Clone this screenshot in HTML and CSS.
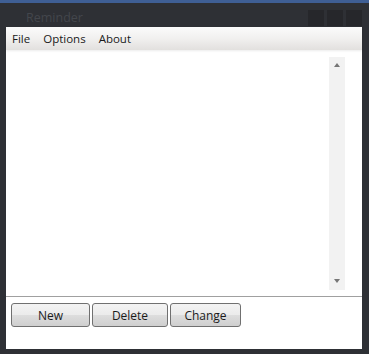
FILE: index.html
```html
<!DOCTYPE html>
<html lang="en">

<head>
  <meta charset="UTF-8" />
  <title>Reminder</title>
  <link rel="stylesheet" href="styles.css">
</head>

<body>
  <div class="window">
    <!-- Title bar -->
    <div class="titlebar">
      <span class="title">Reminder</span>
      <div class="caption-buttons">
        <span class="cap-btn"></span>
        <span class="cap-btn"></span>
        <span class="cap-btn"></span>
      </div>
    </div>

    <div class="client">
      <div class="menubar">
        <span class="menu-item">File</span>
        <span class="menu-item">Options</span>
        <span class="menu-item">About</span>
      </div>

      <div class="list">
        <div class="scrollbar">
          <span class="arrow up"></span>
          <span class="arrow down"></span>
        </div>
      </div>

      <div class="actions">
        <button class="btn btn-new">New</button>
        <button class="btn btn-delete">Delete</button>
        <button class="btn btn-change">Change</button>
      </div>
    </div>
  </div>
</body>

</html>
```

FILE: styles.css
```css
body {
  margin: 0;
  font-family: 'Open Sans', 'Noto Sans', sans-serif;
  background: #2e3035;
  overflow: hidden;
}

.window {
  height: 354px;
  display: flex;
  flex-direction: column;
  border-top: 3px solid #3f5f95;
  box-sizing: border-box;
  background: #2e3035;
}

.titlebar {
  height: 24px;
  display: flex;
  align-items: center;
  justify-content: space-between;
  padding: 0 7px 0 26px;
}

.title {
  font-size: 12.5px;
  color: #43464c;
  margin-top: 4px;
}

.caption-buttons {
  display: flex;
  gap: 3px;
  margin-top: 6px;
}

.cap-btn {
  width: 16px;
  height: 16px;
  background: #26272b;
}

.client {
  flex: 1;
  margin: 0 7px 5px 6px;
  background: #ffffff;
  display: flex;
  flex-direction: column;
}

.menubar {
  height: 23px;
  display: flex;
  align-items: center;
  padding-left: 6px;
  background: linear-gradient(to bottom, #fbfbfb, #f1f0ef 50%, #e2e0de);
  box-shadow: 0 1px 2px rgba(0, 0, 0, 0.08);
}

.menu-item {
  font-size: 11.5px;
  color: #1a1a1a;
  margin-right: 13px;
}

.list {
  flex: 1;
  display: flex;
  justify-content: flex-end;
  padding: 7px 17px 6px 0;
  border-bottom: 1px solid #a0a0a0;
}

.scrollbar {
  width: 16px;
  background: #f2f2f2;
  display: flex;
  flex-direction: column;
  justify-content: space-between;
  align-items: center;
  padding: 6px 0 7px;
}

.arrow {
  width: 0;
  height: 0;
  border-left: 3.5px solid transparent;
  border-right: 3.5px solid transparent;
}

.arrow.up {
  border-bottom: 4px solid #767676;
}

.arrow.down {
  border-top: 4px solid #767676;
}

.actions {
  height: 52px;
  display: flex;
  align-items: flex-start;
  gap: 2px;
  padding: 6px 0 0 5px;
  box-sizing: border-box;
}

.btn {
  height: 24px;
  font-family: inherit;
  font-size: 12px;
  color: #1b1b1b;
  border: 1px solid #707070;
  border-radius: 3px;
  background: linear-gradient(to bottom, #f3f3f3, #ebebeb 50%, #dddddd 51%, #cfcfcf);
  padding: 0;
}

.btn-new {
  width: 79px;
}

.btn-delete {
  width: 76px;
}

.btn-change {
  width: 71px;
}
```
